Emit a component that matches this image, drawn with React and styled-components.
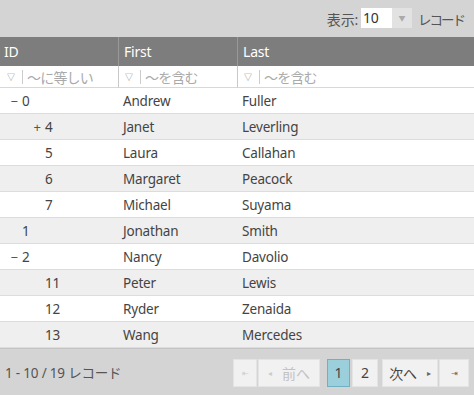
import React from "react";
import styled, { createGlobalStyle } from "styled-components";

const GlobalStyle = createGlobalStyle`
    html, body {
        margin: 0;
        padding: 0;
        background: #ffffff;
    }
    body {
        font-family: "Noto Sans", "Noto Sans CJK JP", sans-serif;
        color: #444;
    }
`

const font = `"Noto Sans", "Noto Sans CJK JP", sans-serif`

const Wrapper = styled.div`
    width: 474px;
    height: 395px;
    display: flex;
    flex-direction: column;
    overflow: hidden;
    font-size: 13.5px;
    letter-spacing: -0.2px;
`

const Toolbar = styled.div`
    height: 37px;
    background: #d4d4d4;
    display: flex;
    align-items: center;
    justify-content: flex-end;
    padding-right: 10px;
    box-sizing: border-box;
`

const ToolLabel = styled.span`
    font-size: 14px;
    color: #555;
    margin-right: 3px;
`

const SizeSelect = styled.div`
    display: flex;
    height: 20px;
    margin-top: -1px;
    .value {
        width: 31px;
        background: #fff;
        font-size: 14px;
        line-height: 20px;
        padding-left: 2px;
        box-sizing: border-box;
        color: #333;
    }
    .arrow {
        width: 20px;
        background: #e2e2e2;
        display: flex;
        align-items: center;
        justify-content: center;
        color: #aaa;
        font-size: 7px;
    }
`

const RecordLabel = styled.span`
    margin-left: 6px;
    font-size: 13.5px;
    letter-spacing: -2px;
    color: #555;
`

const Grid = styled.div`
    display: grid;
    grid-template-columns: 118px 119px 1fr;
`

const HeadCell = styled.div`
    background: #7d7d7d;
    color: #fff;
    height: 29px;
    line-height: 29px;
    padding-left: ${p => (p.$first ? "4px" : "5px")};
    font-size: 14px;
    border-left: ${p => (p.$first ? "none" : "1px solid #999")};
`

const FilterCell = styled.div`
    height: 22px;
    box-sizing: border-box;
    border-left: ${p => (p.$first ? "none" : "1px solid #c8c8c8")};
    border-bottom: 1px solid #d8d8d8;
    display: flex;
    align-items: center;
    padding-left: ${p => (p.$first ? "7px" : "6px")};
    background: #fff;
    .icon {
        font-size: 8px;
        color: #888;
        width: 10px;
    }
    .bar {
        width: 1px;
        height: 14px;
        background: #ccc;
        margin: 0 4px 0 5px;
    }
    .ph {
        color: #aaa;
        font-size: 14px;
        letter-spacing: -0.8px;
    }
`

const Cell = styled.div`
    height: 26px;
    box-sizing: border-box;
    border-bottom: 1px solid #dcdcdc;
    background: ${p => (p.$alt ? "#efefef" : "#ffffff")};
    display: flex;
    align-items: center;
    padding-left: 5px;
    padding-top: 1px;
    color: #444;
`

const TreeCell = styled(Cell)`
    padding-left: ${p => 6 + p.$level * 23}px;
`

const Expander = styled.span`
    width: 16px;
    display: inline-block;
    text-align: center;
    color: #555;
    font-size: 13px;
`

const Footer = styled.div`
    flex: 1;
    background: #d4d4d4;
    display: flex;
    align-items: center;
    justify-content: space-between;
    padding: 0 5px 0 5px;
    box-sizing: border-box;
    border-top: 1px solid #c4c4c4;
`

const Summary = styled.span`
    color: #555;
`

const Pager = styled.div`
    display: flex;
    align-items: center;
    height: 28px;
    margin-top: 1px;
`

const PageButton = styled.div`
    height: 28px;
    box-sizing: border-box;
    width: ${p => p.$w}px;
    margin-left: ${p => p.$gap || 0}px;
    background: ${p => (p.$active ? "#9ccfdc" : "#f1f1f1")};
    border: 1px solid ${p => (p.$active ? "#6fb0c2" : "#e4e4e4")};
    color: ${p => (p.$disabled ? "#c2c2c2" : "#444")};
    display: flex;
    align-items: center;
    justify-content: center;
    gap: 10px;
    font-family: ${font};
    font-size: 14px;
    .sm {
        font-size: 8px;
        color: ${p => (p.$disabled ? "#ccc" : "#666")};
    }
`

const rows = [
    { id: "0", level: 0, exp: "−", first: "Andrew", last: "Fuller" },
    { id: "4", level: 1, exp: "+", first: "Janet", last: "Leverling" },
    { id: "5", level: 1, first: "Laura", last: "Callahan" },
    { id: "6", level: 1, first: "Margaret", last: "Peacock" },
    { id: "7", level: 1, first: "Michael", last: "Suyama" },
    { id: "1", level: 0, first: "Jonathan", last: "Smith" },
    { id: "2", level: 0, exp: "−", first: "Nancy", last: "Davolio" },
    { id: "11", level: 1, first: "Peter", last: "Lewis" },
    { id: "12", level: 1, first: "Ryder", last: "Zenaida" },
    { id: "13", level: 1, first: "Wang", last: "Mercedes" },
]

const filters = ["～に等しい", "～を含む", "～を含む"]

const App = () => {
    return (
        <Wrapper>
            <GlobalStyle />
            <Toolbar>
                <ToolLabel>表示:</ToolLabel>
                <SizeSelect>
                    <div className="value">10</div>
                    <div className="arrow">▼</div>
                </SizeSelect>
                <RecordLabel>レコード</RecordLabel>
            </Toolbar>
            <Grid>
                <HeadCell $first>ID</HeadCell>
                <HeadCell>First</HeadCell>
                <HeadCell>Last</HeadCell>
                {filters.map((f, i) => (
                    <FilterCell key={i} $first={i === 0}>
                        <span className="icon">▽</span>
                        <span className="bar" />
                        <span className="ph">{f}</span>
                    </FilterCell>
                ))}
                {rows.map((r, i) => (
                    <React.Fragment key={r.id}>
                        <TreeCell $alt={i % 2 === 1} $level={r.level}>
                            <Expander>{r.exp || ""}</Expander>
                            {r.id}
                        </TreeCell>
                        <Cell $alt={i % 2 === 1}>{r.first}</Cell>
                        <Cell $alt={i % 2 === 1}>{r.last}</Cell>
                    </React.Fragment>
                ))}
            </Grid>
            <Footer>
                <Summary>1 - 10 / 19 レコード</Summary>
                <Pager>
                    <PageButton $w={24} $disabled><span className="sm">⇤</span></PageButton>
                    <PageButton $w={62} $gap={1} $disabled><span className="sm">◂</span>前へ</PageButton>
                    <PageButton $w={23} $gap={7} $active>1</PageButton>
                    <PageButton $w={26} $gap={2}>2</PageButton>
                    <PageButton $w={56} $gap={4}>次へ<span className="sm">▸</span></PageButton>
                    <PageButton $w={30} $gap={1}><span className="sm">⇥</span></PageButton>
                </Pager>
            </Footer>
        </Wrapper>
    )
}

export default App
